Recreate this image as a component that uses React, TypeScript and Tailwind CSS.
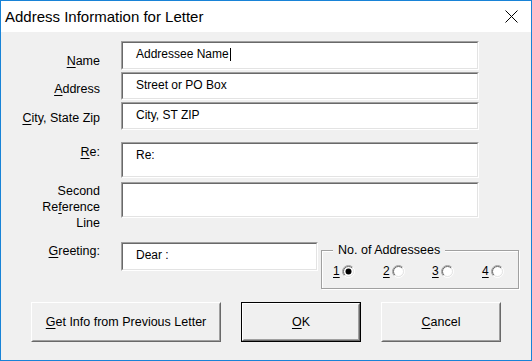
import React from "react";

const font = { fontFamily: '"Liberation Sans", Arial, sans-serif' };

function Box({ h, w = "w-[358px]", children }: { h: string; w?: string; children?: React.ReactNode }) {
  return (
    <div className={`${h} ${w} shrink-0 ml-[20px] box-border border border-t-[#a0a0a0] border-l-[#a0a0a0] border-b-white border-r-white`}>
      <div className="h-full w-full box-border border border-t-[#696969] border-l-[#696969] border-b-[#e3e3e3] border-r-[#e3e3e3] bg-white pl-[13px] pt-[3px] leading-[16px] text-black">
        {children}
      </div>
    </div>
  );
}

function Label({ pt, children }: { pt: string; children: React.ReactNode }) {
  return <div className={`w-[100px] shrink-0 text-right pr-[1px] leading-[16px] text-[12.5px] ${pt}`}>{children}</div>;
}

function Radio({ checked }: { checked?: boolean }) {
  return (
    <svg width="13" height="13" viewBox="0 0 13 13" className="ml-[2px] shrink-0">
      <circle cx="6.5" cy="6.5" r="5" fill="#fff" />
      <path d="M2.257 10.743 A6 6 0 0 1 10.743 2.257" stroke="#a0a0a0" strokeWidth="1" fill="none" />
      <path d="M10.743 2.257 A6 6 0 0 1 2.257 10.743" stroke="#ffffff" strokeWidth="1" fill="none" />
      <path d="M2.964 10.036 A5 5 0 0 1 10.036 2.964" stroke="#696969" strokeWidth="1" fill="none" />
      <path d="M10.036 2.964 A5 5 0 0 1 2.964 10.036" stroke="#e3e3e3" strokeWidth="1" fill="none" />
      {checked && <circle cx="6.5" cy="6.5" r="3" fill="#000" />}
    </svg>
  );
}

function Btn({ w, def, children }: { w: string; def?: boolean; children: React.ReactNode }) {
  const inner = (
    <div className="h-full w-full box-border border border-t-white border-l-white border-b-[#696969] border-r-[#696969]">
      <div className="h-full w-full box-border border border-t-[#f0f0f0] border-l-[#f0f0f0] border-b-[#a0a0a0] border-r-[#a0a0a0] bg-[#f0f0f0] flex items-center justify-center leading-[16px] text-black text-[12.5px]">
        {children}
      </div>
    </div>
  );
  return (
    <div className={`${w} h-[40px] box-border shrink-0 ${def ? "border border-black" : ""}`}>{inner}</div>
  );
}

export default function App() {
  return (
    <div
      className="w-[532px] h-[361px] box-border border border-[#1883d7] bg-[#f0f0f0] flex flex-col text-[12px] text-black overflow-hidden"
      style={font}
    >
      <div className="h-[31px] shrink-0 bg-white flex items-center justify-between pl-[4px] pr-[13px]">
        <span className="text-[15px] leading-[20px]">Address Information for Letter</span>
        <svg width="13" height="13" viewBox="0 0 13 13">
          <path d="M0.5 0.5 L12.5 12.5 M12.5 0.5 L0.5 12.5" stroke="#000" strokeWidth="1" />
        </svg>
      </div>

      <div className="flex flex-col pt-[9px]">
        <div className="flex h-[29px]">
          <Label pt="pt-[12px]"><u className="underline-offset-2">N</u>ame</Label>
          <Box h="h-[29px]">
            <span className="inline-flex items-center">
              Addressee Name<span className="inline-block w-[1px] h-[13px] bg-black ml-[1px]" />
            </span>
          </Box>
        </div>
        <div className="flex h-[28px] mt-[2px]">
          <Label pt="pt-[9px]"><u className="underline-offset-2">A</u>ddress</Label>
          <Box h="h-[28px]">Street or PO Box</Box>
        </div>
        <div className="flex h-[28px] mt-[2px]">
          <Label pt="pt-[8px]"><u className="underline-offset-2">C</u>ity, State Zip</Label>
          <Box h="h-[28px]">City, ST ZIP</Box>
        </div>
        <div className="flex h-[36px] mt-[12px]">
          <Label pt="pt-[2px]"><u className="underline-offset-2">R</u>e:</Label>
          <Box h="h-[36px]">Re:</Box>
        </div>
        <div className="flex h-[36px] mt-[4px]">
          <Label pt="pt-[1px]">
            Second
            <br />
            Re<u className="underline-offset-2">f</u>erence
            <br />
            Line
          </Label>
          <Box h="h-[36px]" />
        </div>
        <div className="flex items-start mt-[24px]">
          <Label pt="pt-[1px]"><u className="underline-offset-2">G</u>reeting:</Label>
          <Box h="h-[29px]" w="w-[197px]">Dear :</Box>
          <div className="relative shrink-0 ml-[3px] mt-[8px] w-[198px] h-[39px] box-border border border-[#a0a0a0] shadow-[inset_1px_1px_0_#ffffff,1px_1px_0_#ffffff]">
            <span className="absolute left-[11px] top-[-9px] px-[5px] bg-[#f0f0f0] leading-[16px] text-[12.5px] whitespace-nowrap">
              No. of Addressees
            </span>
            <div className="flex items-center pl-[11px] pt-[12px]">
              <div className="w-[50px] shrink-0 flex items-center leading-[16px]"><u className="underline-offset-2">1</u><Radio checked /></div>
              <div className="w-[49px] shrink-0 flex items-center leading-[16px]"><u className="underline-offset-2">2</u><Radio /></div>
              <div className="w-[50px] shrink-0 flex items-center leading-[16px]"><u className="underline-offset-2">3</u><Radio /></div>
              <div className="w-[30px] shrink-0 flex items-center leading-[16px]"><u className="underline-offset-2">4</u><Radio /></div>
            </div>
          </div>
        </div>
        <div className="flex pl-[30px] mt-[13px] gap-[20px]">
          <Btn w="w-[190px]"><span><u className="underline-offset-2">G</u>et Info from Previous Letter</span></Btn>
          <Btn w="w-[120px]" def><span><u className="underline-offset-2">O</u>K</span></Btn>
          <Btn w="w-[120px]"><span><u className="underline-offset-2">C</u>ancel</span></Btn>
        </div>
      </div>
    </div>
  );
}
